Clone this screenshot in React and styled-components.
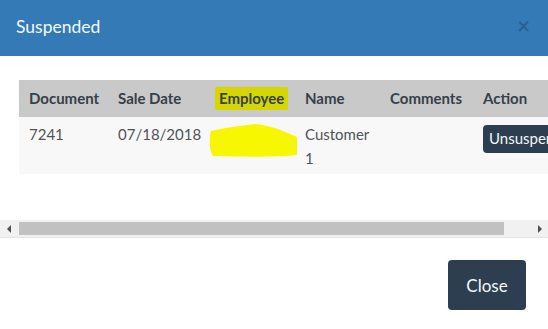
import React from 'react';
import styled, { createGlobalStyle } from 'styled-components';

const Global = createGlobalStyle`
  body {
    margin: 0;
    background: #ffffff;
    font-family: Lato, "Open Sans", "Liberation Sans", sans-serif;
    overflow: hidden;
  }
`;

const Modal = styled.div`
  width: 548px;
  height: 329px;
  display: flex;
  flex-direction: column;
  background: #fff;
`;

const Header = styled.div`
  height: 56px;
  flex: none;
  background: #337ab7;
  display: flex;
  align-items: center;
  justify-content: space-between;
  padding: 0 18px 0 16px;
  box-sizing: border-box;
`;

const Title = styled.h4`
  margin: 0;
  font-size: 17.5px;
  font-weight: 400;
  color: #f4f9ff;
  line-height: 1;
  padding-bottom: 2px;
`;

const Dismiss = styled.span`
  font-size: 22px;
  font-weight: 700;
  color: rgba(0, 0, 0, 0.22);
  line-height: 1;
  padding-bottom: 4px;
`;

const Body = styled.div`
  padding-top: 24px;
`;

const Scroller = styled.div`
  overflow: hidden;
  height: 140px;
  padding-left: 19px;
`;

const Table = styled.table`
  border-collapse: collapse;
  width: 574px;
  table-layout: fixed;
`;

const HeadRow = styled.tr`
  background: #c9c9c9;
`;

const Th = styled.th`
  box-sizing: border-box;
  text-align: left;
  font-size: 15px;
  font-weight: 700;
  color: #36404a;
  padding: 8px 10px;
  line-height: 21px;
  white-space: nowrap;
  width: ${p => p.$w}px;
`;

const Marked = styled.span`
  background: #d6d600;
  border-radius: 2px;
  padding: 2px 4px 3px;
  margin-left: -4px;
`;

const Row = styled.tr`
  background: #f8f8f8;
`;

const Td = styled.td`
  vertical-align: top;
  font-size: 15px;
  color: #4f5358;
  padding: 5px 10px 4px;
  line-height: 24px;
  position: relative;
`;

const Blob = styled.svg`
  position: absolute;
  left: 0;
  top: 7px;
`;

const ActionButton = styled.button`
  background: #2c3e50;
  color: #f2f6fa;
  border: none;
  border-radius: 4px;
  font-family: inherit;
  font-size: 15px;
  padding: 5px 6px 6px;
  line-height: 17px;
  white-space: nowrap;
  margin-top: 3px;
`;

const ScrollBar = styled.div`
  height: 17px;
  background: #f1f1f1;
  border-bottom: 1px solid #e4e4e4;
  display: flex;
  align-items: center;
`;

const Arrow = styled.div`
  width: 17px;
  flex: none;
  display: flex;
  justify-content: center;
  &::before {
    content: '';
    border-top: 4px solid transparent;
    border-bottom: 4px solid transparent;
    ${p => (p.$right ? 'border-left: 4px solid #505050;' : 'border-right: 4px solid #505050;')}
  }
`;

const Track = styled.div`
  flex: 1;
  height: 13px;
  display: flex;
  padding-left: 2px;
`;

const Thumb = styled.div`
  width: 485px;
  height: 100%;
  background: #c1c1c1;
`;

const Footer = styled.div`
  flex: 1;
  display: flex;
  justify-content: flex-end;
  align-items: flex-start;
  padding: 22px 22px 0 0;
`;

const CloseButton = styled.button`
  width: 78px;
  height: 50px;
  background: #2c3e50;
  color: #f4f8fb;
  border: none;
  border-radius: 4px;
  font-family: inherit;
  font-size: 17px;
`;

const cols = [
  ['Document', 89],
  ['Sale Date', 101],
  ['Employee', 86],
  ['Name', 85],
  ['Comments', 93],
  ['Action', 120],
];

export default function App() {
  return (
    <Modal>
      <Global />
      <Header>
        <Title>Suspended</Title>
        <Dismiss>×</Dismiss>
      </Header>
      <Body>
        <Scroller>
          <Table>
            <thead>
              <HeadRow>
                {cols.map(([name, w]) => (
                  <Th key={name} $w={w}>
                    {name === 'Employee' ? <Marked>{name}</Marked> : name}
                  </Th>
                ))}
              </HeadRow>
            </thead>
            <tbody>
              <Row>
                <Td>7241</Td>
                <Td>07/18/2018</Td>
                <Td>
                  <Blob width="90" height="34" viewBox="0 0 90 34">
                    <path
                      d="M2 7 C 14 4, 30 2, 46 0 C 60 1, 72 6, 88 13 L 88 31 C 70 33, 40 33, 4 32 C 0 26, 0 14, 2 7 Z"
                      fill="#f7f700"
                    />
                  </Blob>
                </Td>
                <Td>Customer<br />1</Td>
                <Td></Td>
                <Td><ActionButton>Unsuspend</ActionButton></Td>
              </Row>
            </tbody>
          </Table>
        </Scroller>
        <ScrollBar>
          <Arrow />
          <Track><Thumb /></Track>
          <Arrow $right />
        </ScrollBar>
      </Body>
      <Footer>
        <CloseButton>Close</CloseButton>
      </Footer>
    </Modal>
  );
}
